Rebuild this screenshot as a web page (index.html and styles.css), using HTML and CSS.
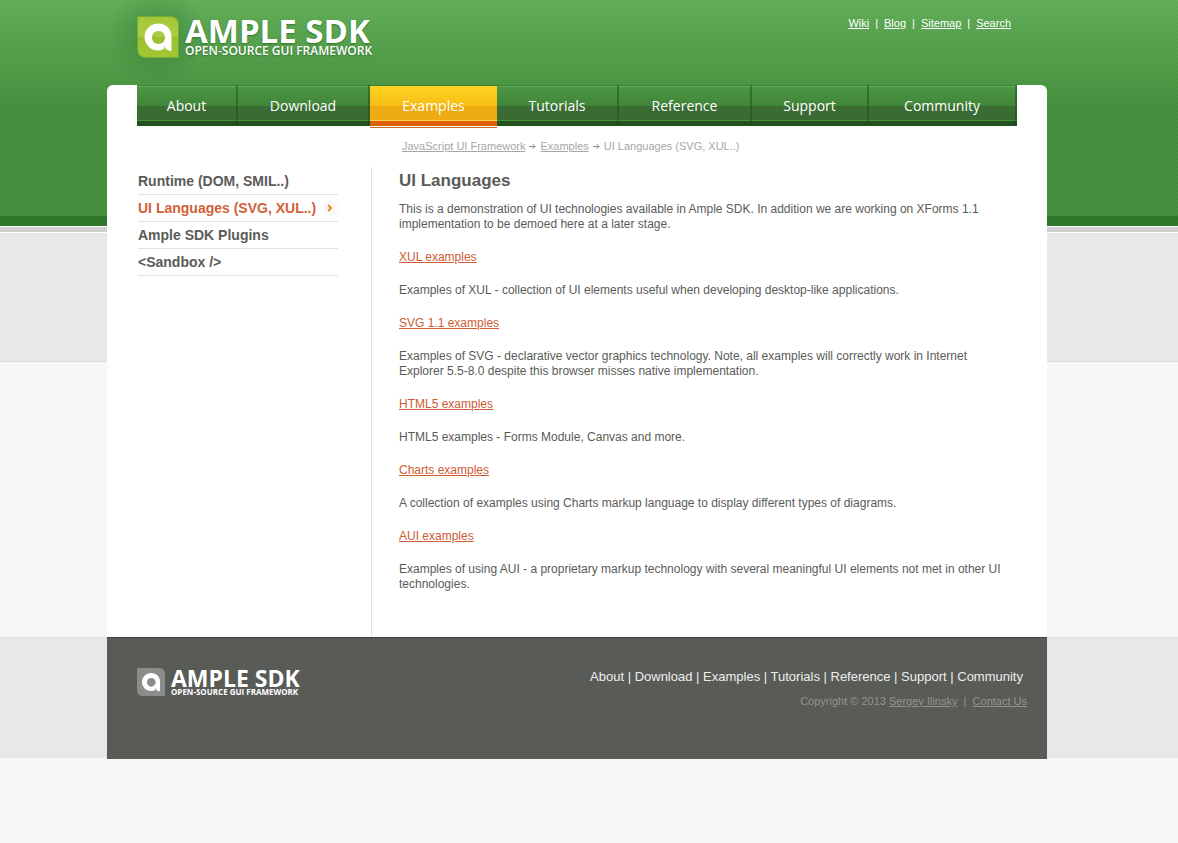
FILE: index.html
```html
<!DOCTYPE html>
<html lang="en">
<head>
<meta charset="utf-8">
<title>UI Languages - Ample SDK</title>
<link rel="stylesheet" href="styles.css">
</head>
<body>
<div class="shell">
  <header class="header">
    <a class="logo" href="#">
      <svg class="logo-mark" viewBox="0 0 42 42" aria-hidden="true">
        <defs><linearGradient id="lime" x1="0" y1="0" x2="0" y2="1"><stop offset="0" stop-color="#a3c73a"/><stop offset=".48" stop-color="#b0cc40"/><stop offset=".5" stop-color="#98c02f"/><stop offset="1" stop-color="#a2c932"/></linearGradient></defs>
        <path d="M.5 .5H33Q41.500 .5 41.500 9V41.500H9Q.5 41.500 .5 33Z" fill="url(#lime)" stroke="#70ad38"/>
        <path fill="#fff" fill-rule="evenodd" d="M21.500 7.500C29 7.500 34.500 13 34.500 20.500V35C30.500 35 28.500 33 27.500 30.500L26.500 28L27.500 32.500C25.500 33.800 23.500 34.500 21 34.500C13.500 34.500 7.500 28.500 7.500 21C7.500 13.500 13.500 7.500 21.500 7.500ZM21.500 15C17.500 15 15 17.800 15 21.500C15 25.200 17.800 28 21.500 28C25.200 28 28 25.200 28 21.500C28 17.800 25.200 15 21.500 15Z"/>
      </svg>
      <span class="logo-text"><strong class="logo-name">AMPLE SDK</strong><span class="logo-tag">OPEN-SOURCE GUI FRAMEWORK</span></span>
    </a>
    <nav class="quick" aria-label="Quick links"><a href="#">Wiki</a><span>|</span><a href="#">Blog</a><span>|</span><a href="#">Sitemap</a><span>|</span><a href="#">Search</a></nav>
  </header>
  <div class="page">
    <nav class="tabs" aria-label="Main">
      <a href="#">About</a><a href="#">Download</a><a class="active" href="#" aria-current="page">Examples</a><a href="#">Tutorials</a><a href="#">Reference</a><a href="#">Support</a><a href="#">Community</a>
    </nav>
    <nav class="crumbs" aria-label="Breadcrumb">
      <a href="#">JavaScript UI Framework</a>
      <svg viewBox="0 0 7 7" aria-hidden="true"><path d="M0 3.500H6M3.500 1L6 3.500L3.500 6"/></svg>
      <a href="#">Examples</a>
      <svg viewBox="0 0 7 7" aria-hidden="true"><path d="M0 3.500H6M3.500 1L6 3.500L3.500 6"/></svg>
      <span>UI Languages (SVG, XUL..)</span>
    </nav>
    <div class="columns">
      <nav class="side" aria-label="Section">
        <a href="#">Runtime (DOM, SMIL..)</a>
        <a class="current" href="#">UI Languages (SVG, XUL..)<svg viewBox="0 0 16 16" aria-hidden="true"><circle cx="8" cy="8" r="8" fill="#f9f9f9"/><path d="M6 5L9 8L6 11" fill="none" stroke="#e78b1c" stroke-width="2"/></svg></a>
        <a href="#">Ample SDK Plugins</a>
        <a href="#">&lt;Sandbox /&gt;</a>
      </nav>
      <main class="content">
        <h1>UI Languages</h1>
        <p>This is a demonstration of UI technologies available in Ample SDK. In addition we are working on XForms 1.1 implementation to be demoed here at a later stage.</p>
        <p><a href="#">XUL examples</a></p>
        <p>Examples of XUL - collection of UI elements useful when developing desktop-like applications.</p>
        <p><a href="#">SVG 1.1 examples</a></p>
        <p>Examples of SVG - declarative vector graphics technology. Note, all examples will correctly work in Internet Explorer 5.5-8.0 despite this browser misses native implementation.</p>
        <p><a href="#">HTML5 examples</a></p>
        <p>HTML5 examples - Forms Module, Canvas and more.</p>
        <p><a href="#">Charts examples</a></p>
        <p>A collection of examples using Charts markup language to display different types of diagrams.</p>
        <p><a href="#">AUI examples</a></p>
        <p>Examples of using AUI - a proprietary markup technology with several meaningful UI elements not met in other UI technologies.</p>
      </main>
    </div>
  </div>
</div>
<footer class="footer-band">
  <div class="footer">
    <a class="logo logo-small" href="#">
      <svg class="logo-mark" viewBox="0 0 42 42" aria-hidden="true">
        <path d="M0 0H33Q42 0 42 9V42H9Q0 42 0 33Z" fill="#8c8d8b"/>
        <path fill="#fff" fill-rule="evenodd" d="M21.500 7.500C29 7.500 34.500 13 34.500 20.500V35C30.500 35 28.500 33 27.500 30.500L26.500 28L27.500 32.500C25.500 33.800 23.500 34.500 21 34.500C13.500 34.500 7.500 28.500 7.500 21C7.500 13.500 13.500 7.500 21.500 7.500ZM21.500 15C17.500 15 15 17.800 15 21.500C15 25.200 17.800 28 21.500 28C25.200 28 28 25.200 28 21.500C28 17.800 25.200 15 21.500 15Z"/>
      </svg>
      <span class="logo-text"><strong class="logo-name">AMPLE SDK</strong><span class="logo-tag">OPEN-SOURCE GUI FRAMEWORK</span></span>
    </a>
    <div class="footer-info">
      <nav class="footer-nav" aria-label="Footer"><a href="#">About</a> | <a href="#">Download</a> | <a href="#">Examples</a> | <a href="#">Tutorials</a> | <a href="#">Reference</a> | <a href="#">Support</a> | <a href="#">Community</a></nav>
      <p class="legal">Copyright © 2013 <a href="#">Sergey Ilinsky</a> &nbsp;|&nbsp; <a href="#">Contact Us</a></p>
    </div>
  </div>
</footer>
</body>
</html>
```
FILE: styles.css
```css
* { box-sizing: border-box; }

body {
  margin: 0;
  min-height: 100vh;
  font: 12px/15px "Liberation Sans", Arial, sans-serif;
  color: #5a5b58;
  background:
    linear-gradient(transparent 226px, #fff 226px, #fff 227px, #d0d0d0 227px, #d0d0d0 232px, #fff 232px, #fff 233px, #e8e8e8 233px, #e8e8e8 361px, #dcdcdc 361px, #dcdcdc 362px, #f7f7f7 362px) no-repeat,
    conic-gradient(rgba(0, 60, 0, 0.06) 25%, transparent 0 50%, rgba(0, 60, 0, 0.06) 0 75%, transparent 0) 0 0 / 4px 4px,
    linear-gradient(#64b05b 0, #48913f 110px, #48913f 216px, #30782a 216px) no-repeat,
    #f7f7f7;
}

a { color: inherit; }

.shell, .footer-band { padding: 0 24px 0 0; }

.header, .page, .footer {
  width: 100%;
  max-width: 940px;
  margin: 0 auto;
}

.header {
  display: flex;
  justify-content: space-between;
  align-items: flex-start;
  min-height: 85px;
  padding: 16px 36px 0 30px;
  background: radial-gradient(circle at 50px 36px, rgba(45, 115, 40, 0.5), transparent 50px);
  color: #fff;
}

.logo {
  display: flex;
  gap: 6px;
  color: #fff;
  text-decoration: none;
  font-family: "Open Sans", "Noto Sans", sans-serif;
}
.header .logo { text-shadow: 0 1px 2px rgba(0, 50, 0, 0.4); }
.logo-mark { width: 42px; height: 42px; }
.logo-text { display: flex; flex-direction: column; white-space: nowrap; }
.logo-name { font-size: 33px; line-height: 29px; }
.logo-tag { font-size: 12px; line-height: 12px; font-weight: 600; }
.logo-small .logo-mark { width: 28px; height: 28px; }
.logo-small .logo-name { font-size: 23px; line-height: 20px; }
.logo-small .logo-tag { font-size: 8px; line-height: 8px; font-weight: 700; }

.quick { display: flex; gap: 6px; font-size: 11px; }

.page { background: #fff; border-radius: 6px 6px 0 0; padding: 0 30px; }

.tabs {
  display: grid;
  grid-template-columns: 101fr 132fr 127fr 122fr 133fr 117fr 148fr;
  height: 41px;
  font: 14px/42px "Open Sans", "Noto Sans", sans-serif;
  background: linear-gradient(#3c8335 0 1px, #65ab5b 1px 2px, #4a9643 2px, #428539 21px, #3a6c34 21px, #386a31 35px, #42933a 35px 36px, #214f1d 36px);
}
.tabs a {
  height: 41px;
  color: #fff;
  text-align: center;
  text-decoration: none;
  border-right: 2px solid rgba(25, 80, 20, 0.5);
}
.tabs .active {
  height: 43px;
  border-right: 0;
  background: linear-gradient(#3c8335 0 1px, #fbd41f 1px, #f7bd16 21px, #edaa11 21px, #efad12 35px, #ffd04b 35px 36px, #dc6200 36px 41px, #fff 41px 42px, #c66b2d 42px);
}

.crumbs {
  display: flex;
  align-items: center;
  gap: 4px;
  padding: 13px 0 0 265px;
  font-size: 11px;
  color: #a6a7a4;
}
.crumbs svg { width: 7px; height: 7px; fill: none; stroke: #8d8e8c; }

.columns { display: grid; grid-template-columns: 235px 1fr; margin-top: 13px; }
.side { border-right: 1px solid #e3e3e3; padding: 1px 33px 0 1px; }
.side a {
  display: flex;
  align-items: center;
  justify-content: space-between;
  height: 27px;
  border-bottom: 1px solid #e3e3e3;
  font-size: 14px;
  font-weight: 700;
  white-space: nowrap;
  text-decoration: none;
}
.side .current { color: #d0623a; }
.side svg { width: 16px; height: 16px; }

.content { padding: 4px 8px 45px 27px; }
.content h1 { margin: 0 0 11px; font-size: 17px; line-height: 20px; }
.content p { margin: 0 0 18px; }
.content p:last-child { margin-bottom: 0; }
.content a { color: #cc5c35; }

.footer-band { background: linear-gradient(#dcdcdc 0 1px, #e8e8e8 1px 121px, #f7f7f7 121px); }
.footer {
  display: flex;
  justify-content: space-between;
  align-items: flex-start;
  min-height: 122px;
  padding: 30px 20px 0 30px;
  border-top: 1px solid #41423f;
  background: #595b57;
}
.footer-info { text-align: right; }
.footer-nav { padding-right: 4px; font-size: 13px; line-height: 18px; color: #eee; }
.footer-nav a { text-decoration: none; }
.legal { margin: 8px 0 0; font-size: 11px; color: #929390; }
```
